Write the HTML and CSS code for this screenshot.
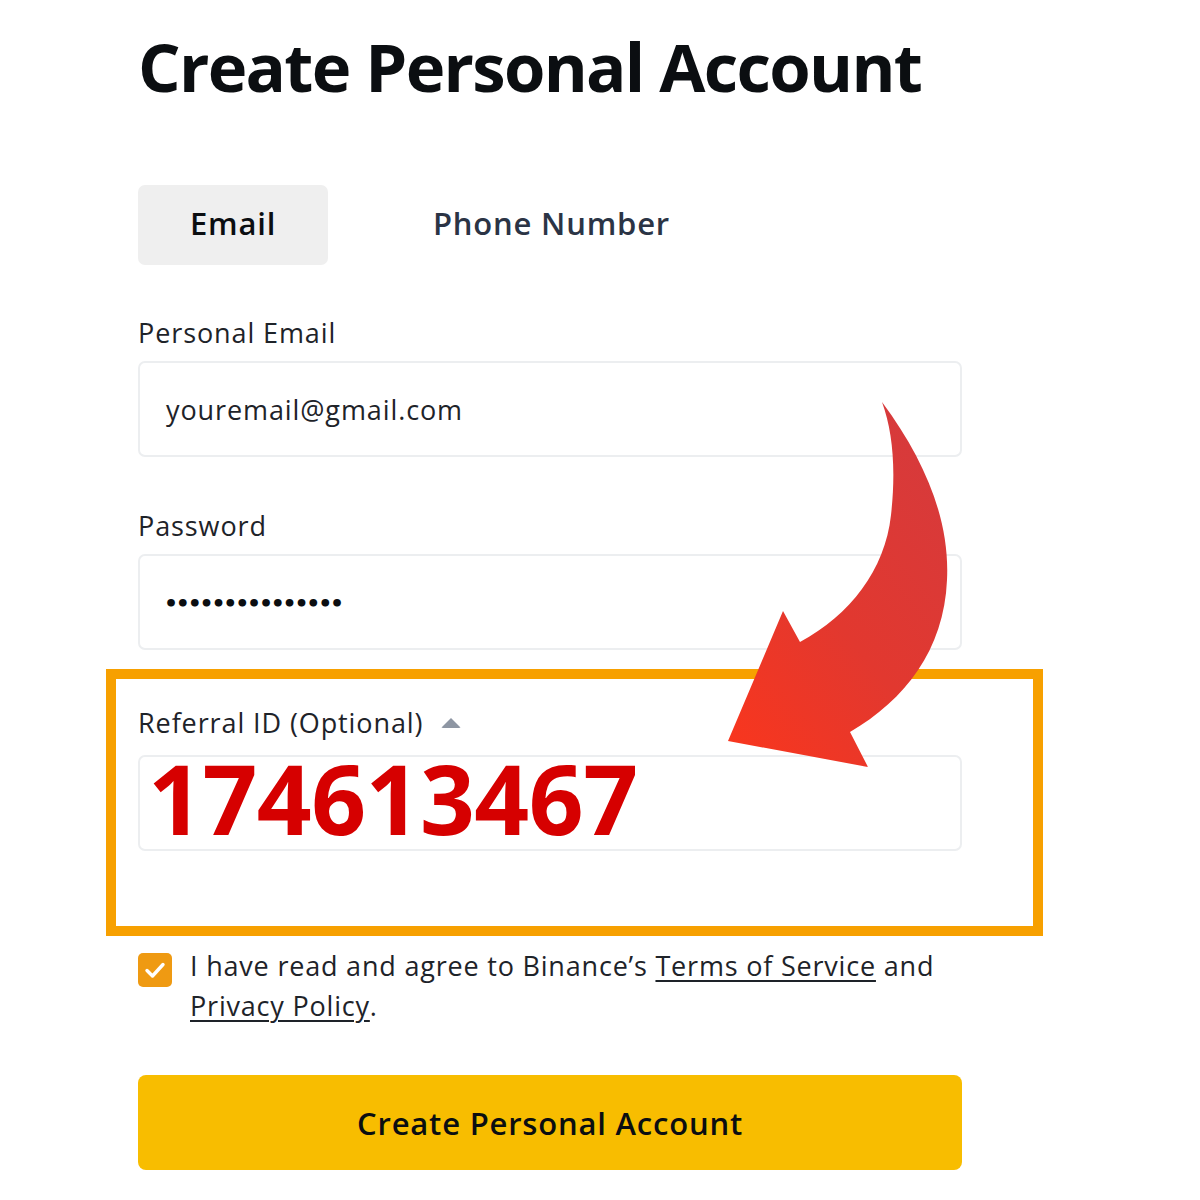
FILE: index.html
```html
<!DOCTYPE html>
<html lang="en">
<head>
<meta charset="utf-8">
<title>Create Personal Account</title>
<link rel="stylesheet" href="styles.css">
</head>
<body>
<main class="page">
  <h1 class="title">Create Personal Account</h1>

  <div class="tabs">
    <div class="tab tab-active">Email</div>
    <div class="tab">Phone Number</div>
  </div>

  <div class="field">
    <div class="label">Personal Email</div>
    <div class="input"><span class="value">youremail@gmail.com</span></div>
  </div>

  <div class="field field-pw">
    <div class="label">Password</div>
    <div class="input"><span class="dots">&#8226;&#8226;&#8226;&#8226;&#8226;&#8226;&#8226;&#8226;&#8226;&#8226;&#8226;&#8226;&#8226;&#8226;&#8226;</span></div>
  </div>

  <div class="highlight">
    <div class="label label-ref">Referral ID (Optional) <span class="caret"></span></div>
    <div class="input"><span class="refcode">174613467</span></div>
  </div>

  <div class="agree">
    <span class="check">
      <svg viewBox="0 0 34 34" width="34" height="34"><path d="M9 17.5 L14.5 23 L25 11.5" fill="none" stroke="#fff" stroke-width="3.4" stroke-linecap="round" stroke-linejoin="round"/></svg>
    </span>
    <p class="agree-text">I have read and agree to Binance’s <u>Terms of Service</u> and<br><u>Privacy Policy</u>.</p>
  </div>

  <button class="submit">Create Personal Account</button>

  <svg class="arrow" viewBox="0 0 1200 1200" width="1200" height="1200">
    <defs>
      <linearGradient id="ag" x1="0.8" y1="0" x2="0.1" y2="1">
        <stop offset="0" stop-color="#d63a3c"/>
        <stop offset="0.55" stop-color="#e2382f"/>
        <stop offset="1" stop-color="#f8361e"/>
      </linearGradient>
    </defs>
    <path d="M882 402 C925 460 950 520 947 580 C944 650 905 700 850 732 L868 767 L728 741 L783 611 L800 642 C850 615 885 570 891 515 C896 470 893 432 882 402 Z" fill="url(#ag)"/>
  </svg>
</main>
</body>
</html>
```

FILE: styles.css
```css
* { box-sizing: border-box; }
html, body { margin: 0; padding: 0; background: #fff; }
body {
  font-family: "Open Sans", "Liberation Sans", sans-serif;
  color: #1e2329;
  width: 1200px;
  height: 1200px;
  overflow: hidden;
}
.page {
  position: relative;
  padding-left: 138px;
  width: 1200px;
  height: 1200px;
}
.title {
  margin: 0;
  padding-top: 33px;
  font-size: 67px;
  line-height: 67px;
  font-weight: 700;
  letter-spacing: -1.7px;
  color: #0b0e11;
}
.tabs {
  display: flex;
  align-items: center;
  margin-top: 85px;
  height: 80px;
}
.tab {
  height: 80px;
  display: flex;
  align-items: center;
  justify-content: center;
  font-size: 31px;
  font-weight: 600;
  color: #2b3445;
  letter-spacing: 0.8px;
  padding-bottom: 5px;
}
.tab-active {
  width: 190px;
  background: #efefef;
  border-radius: 7px;
  color: #0b0e11;
  margin-right: 105px;
}
.field { width: 824px; margin-top: 52px; }
.field-pw { margin-top: 53px; }
.label {
  font-size: 27px;
  line-height: 32px;
  height: 32px;
  color: #1e2329;
  letter-spacing: 0.9px;
}
.input {
  margin-top: 12px;
  height: 96px;
  border: 2px solid #eceef0;
  border-radius: 7px;
  display: flex;
  align-items: center;
  padding-left: 26px;
}
.value {
  font-size: 27px;
  color: #1e2329;
  letter-spacing: 0.9px;
}
.dots {
  font-family: "DejaVu Sans", sans-serif;
  font-size: 22px;
  font-weight: 700;
  letter-spacing: -2.2px;
  color: #0b0e11;
  padding-top: 2px;
  margin-left: -2px;
}
.highlight {
  margin-top: 19px;
  margin-left: -32px;
  width: 937px;
  height: 267px;
  border: 10px solid #f7a000;
  padding: 28px 0 0 22px;
}
.highlight .input {
  width: 824px;
  margin-top: 16px;
  padding-left: 8px;
}
.caret {
  display: inline-block;
  width: 0;
  height: 0;
  border-left: 10px solid transparent;
  border-right: 10px solid transparent;
  border-bottom: 10px solid #8e96a3;
  border-radius: 2px;
  margin-left: 10px;
  vertical-align: 5px;
}
.refcode {
  font-family: "Open Sans", "Noto Sans", sans-serif;
  font-weight: 700;
  font-size: 96px;
  line-height: 1;
  color: #d60000;
  letter-spacing: -0.5px;
  margin-top: -10px;
}
.agree {
  display: flex;
  align-items: flex-start;
  margin-top: 10px;
}
.check {
  flex: none;
  width: 34px;
  height: 34px;
  border-radius: 5px;
  background: #ef9a12;
  margin-top: 7px;
  margin-right: 18px;
  display: flex;
}
.agree-text {
  margin: 0;
  font-size: 27px;
  line-height: 40px;
  color: #1e2329;
  letter-spacing: 0.8px;
}
.agree-text u { text-underline-offset: 4px; text-decoration-thickness: 2px; }
.submit {
  display: block;
  margin-top: 49px;
  width: 824px;
  height: 95px;
  border: none;
  border-radius: 8px;
  background: #f8bd00;
  font-family: "Open Sans", "Liberation Sans", sans-serif;
  font-size: 31px;
  font-weight: 600;
  color: #0b0e11;
  letter-spacing: 0.8px;
  padding: 0;
}
.arrow {
  position: absolute;
  left: 0;
  top: 0;
  pointer-events: none;
}
```
